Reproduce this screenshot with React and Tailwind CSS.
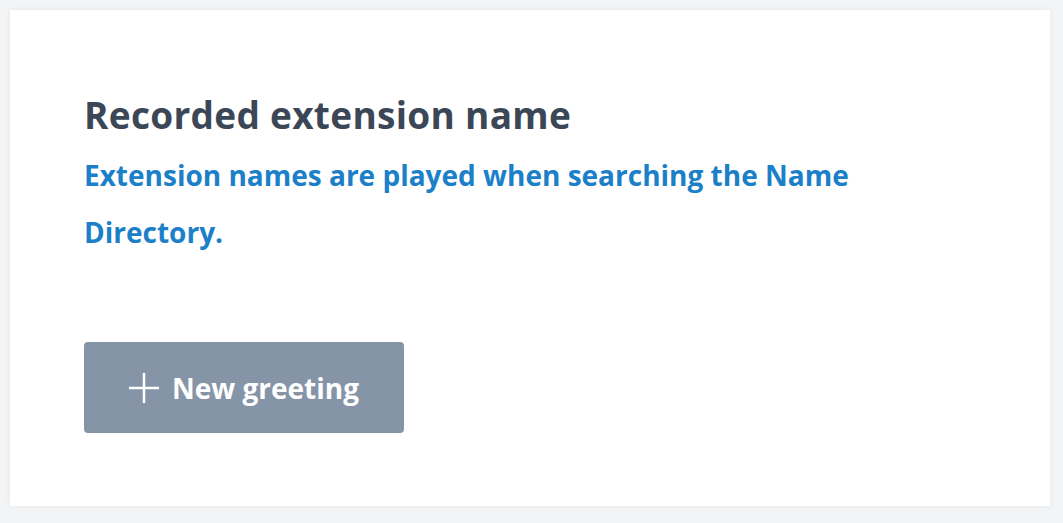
import React from 'react';

function PlusIcon() {
  return (
    <svg width="30" height="30" viewBox="0 0 30 30" fill="none" stroke="currentColor" strokeWidth="2.5">
      <line x1="15" y1="0" x2="15" y2="30" />
      <line x1="0" y1="15" x2="30" y2="15" />
    </svg>
  );
}

export default function App() {
  return (
    <div
      className="min-h-screen bg-[#f3f4f6] p-[10px]"
      style={{ fontFamily: '"Open Sans", Lato, sans-serif' }}
    >
      <div className="w-[1040px] h-[496px] bg-white shadow-[0_0_6px_rgba(0,0,0,0.06)] pl-[74px] pt-[83px]">
        <h2 className="text-[37px] leading-[44px] font-bold tracking-[0.3px] text-[#3b4757]">
          Recorded extension name
        </h2>
        <p className="mt-[10px] max-w-[800px] text-[28px] leading-[57px] font-bold text-[#1b80c8]">
          Extension names are played when searching the Name Directory.
        </p>
        <button className="mt-[81px] w-[320px] h-[91px] rounded-[4px] bg-[#8694a8] text-white flex items-center justify-center gap-[13px]">
          <PlusIcon />
          <span className="text-[28px] font-bold">New greeting</span>
        </button>
      </div>
    </div>
  );
}
